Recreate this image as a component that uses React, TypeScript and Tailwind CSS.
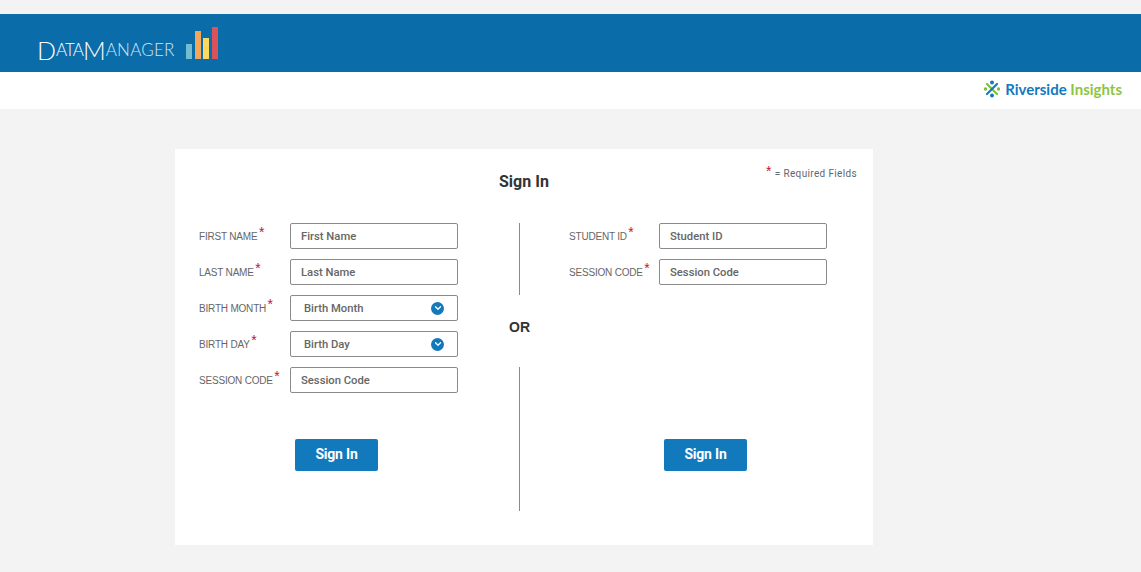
import { ChevronDown } from 'lucide-react'

function Star() {
  return <span className="relative -top-[3px] ml-[1.5px] text-[14px] leading-none text-[#c8102e] font-['Liberation_Sans',sans-serif]">*</span>
}

function Field({ label, placeholder, labelWidth = 'w-[91px]' }: { label: string; placeholder: string; labelWidth?: string }) {
  return (
    <div className="flex items-center h-[26px]">
      <label className={`${labelWidth} shrink-0 whitespace-nowrap text-[10px] tracking-[-0.2px] text-[#666666] font-['Liberation_Sans',sans-serif]`}>
        {label}
        <Star />
      </label>
      <div className="w-[168px] h-[26px] flex items-center pl-[10px] pt-[2px] bg-white border border-[#8a8a8a] rounded-[2px] text-[11.25px] font-medium text-[#666666] font-['Roboto',sans-serif]">
        {placeholder}
      </div>
    </div>
  )
}

function SelectField({ label, placeholder }: { label: string; placeholder: string }) {
  return (
    <div className="flex items-center h-[26px]">
      <label className="w-[91px] shrink-0 whitespace-nowrap text-[10px] tracking-[-0.2px] text-[#666666] font-['Liberation_Sans',sans-serif]">
        {label}
        <Star />
      </label>
      <div className="w-[168px] h-[26px] flex items-center justify-between pl-[13px] pr-[13px] bg-white border border-[#8a8a8a] rounded-[2px] text-[11.25px] font-medium text-[#666666] font-['Roboto',sans-serif]">
        <span className="pt-[2px]">{placeholder}</span>
        <span className="w-[13px] h-[13px] rounded-full bg-[#1279bd] flex items-center justify-center">
          <ChevronDown size={10} strokeWidth={3} className="text-white" />
        </span>
      </div>
    </div>
  )
}

function SubmitButton() {
  return (
    <button className="w-[83px] h-[32px] pb-[1px] bg-[#1279bd] rounded-[2px] text-white text-[14px] tracking-[-0.2px] font-bold font-['Roboto',sans-serif]">
      Sign In
    </button>
  )
}

export default function App() {
  return (
    <div className="min-h-[572px] bg-[#f3f3f3] pt-[14px]">
      <header className="h-[58px] bg-[#0a6ca9] flex items-end pl-[37px] pb-[13px]">
        <div className="w-[137px] -mb-[1px] flex items-end leading-none text-white font-['Lato',sans-serif] font-light">
          <span className="text-[25px] leading-[20px]">D</span>
          <span className="text-[17px] leading-[20px] tracking-[-0.9px]">ATA</span>
          <span className="text-[25px] leading-[20px]">M</span>
          <span className="text-[17px] leading-[20px] tracking-[0.2px] text-[#d5e6f1]">ANAGER</span>
        </div>
        <svg width="32" height="32" viewBox="0 0 32 32" className="ml-[12px]">
          <rect x="0" y="17" width="6" height="15" fill="#74bccf" />
          <rect x="9" y="4" width="6" height="28" fill="#f2a65a" />
          <rect x="17" y="11" width="6" height="21" fill="#fdd75f" />
          <rect x="26" y="0" width="6" height="32" fill="#d9545a" />
        </svg>
      </header>

      <div className="h-[37px] bg-white flex items-center justify-end pr-[19px] pb-[3px]">
        <svg width="16" height="18" viewBox="0 0 16 18" className="mr-[5px]">
          <circle cx="8" cy="2.5" r="2" fill="#1279bd" />
          <circle cx="8" cy="15.5" r="2" fill="#1279bd" />
          <circle cx="1.5" cy="9" r="1.7" fill="#7ac143" />
          <circle cx="14.5" cy="9" r="1.7" fill="#7ac143" />
          <path d="M3 4 L8 9 L13 14" fill="none" stroke="#7ac143" strokeWidth="2.2" strokeLinecap="round" />
          <path d="M13 4 L8 9 L3 14" fill="none" stroke="#1279bd" strokeWidth="2.2" strokeLinecap="round" />
        </svg>
        <span className="text-[15px] font-bold leading-none font-['Lato',sans-serif]">
          <span className="text-[#1279bd]">Riverside</span> <span className="text-[#8cc63f]">Insights</span>
        </span>
      </div>

      <main className="ml-[175px] mt-[40px] w-[698px] h-[396px] bg-white px-[24px]">
        <div className="grid grid-cols-[1fr_auto_1fr] h-[74px] pt-[23px] -mr-[8px]">
          <div />
          <h1 className="-translate-x-[4px] text-[16px] leading-[20px] tracking-[0.05px] font-bold text-[#333333] font-['Roboto',sans-serif]">Sign In</h1>
          <p className="justify-self-end -mt-[8px] text-[10px] tracking-[0.35px] leading-[20px] text-[#5f6670] font-['Roboto',sans-serif]">
            <span className="relative -top-[1px] mr-[3px] text-[14px] leading-none text-[#c8102e] font-['Liberation_Sans',sans-serif]">*</span>
            = Required Fields
          </p>
        </div>

        <div className="flex">
          <div className="w-[259px] flex flex-col">
            <div className="flex flex-col gap-[10px]">
              <Field label="FIRST NAME" placeholder="First Name" />
              <Field label="LAST NAME" placeholder="Last Name" />
              <SelectField label="BIRTH MONTH" placeholder="Birth Month" />
              <SelectField label="BIRTH DAY" placeholder="Birth Day" />
              <Field label="SESSION CODE" placeholder="Session Code" />
            </div>
            <div className="mt-[46px] pl-[96px]">
              <SubmitButton />
            </div>
          </div>

          <div className="w-[122px] flex flex-col items-center">
            <div className="w-px h-[72px] bg-[#8a8a8a]" />
            <div className="h-[72px] pb-[8px] pl-[1px] flex items-center text-[14px] font-bold text-[#333333] font-['Liberation_Sans',sans-serif]">OR</div>
            <div className="w-px h-[144px] bg-[#8a8a8a]" />
          </div>

          <div className="w-[258px] -ml-[11px] flex flex-col">
            <div className="flex flex-col gap-[10px]">
              <Field label="STUDENT ID" placeholder="Student ID" labelWidth="w-[90px]" />
              <Field label="SESSION CODE" placeholder="Session Code" labelWidth="w-[90px]" />
            </div>
            <div className="mt-[154px] pl-[95px]">
              <SubmitButton />
            </div>
          </div>
        </div>
      </main>
    </div>
  )
}
